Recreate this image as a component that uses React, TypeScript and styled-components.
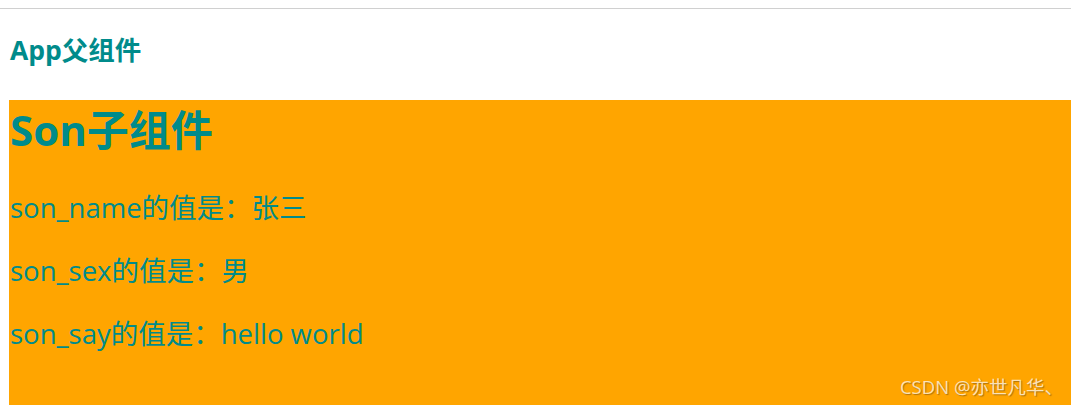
import styled, { createGlobalStyle } from 'styled-components';

const GlobalStyle = createGlobalStyle`
  html, body {
    margin: 0;
    padding: 0;
    background: #fff;
    font-family: "Open Sans", "Noto Sans CJK SC", sans-serif;
  }
`;

const Page = styled.div`
  width: 1071px;
  height: 405px;
  overflow: hidden;
`;

const TopRule = styled.div`
  margin-top: 8px;
  border-top: 1px solid #d0d0d0;
`;

const ParentTitle = styled.h3`
  margin: 0;
  padding: 26px 0 0 10px;
  height: 65px;
  line-height: 30px;
  font-size: 26.5px;
  font-weight: 700;
  color: #008b8b;
`;

const SonBox = styled.section`
  position: relative;
  margin-left: 9px;
  height: 305px;
  padding: 5px 0 0 1px;
  box-sizing: border-box;
  background: #ffa500;
  color: #008b8b;
`;

const SonTitle = styled.h1`
  margin: 0 0 35px;
  line-height: 50px;
  font-size: 42px;
  font-weight: 700;
`;

const Line = styled.p`
  margin: 0 0 27px;
  line-height: 36px;
  font-size: 27.5px;
`;

const Watermark = styled.span`
  position: absolute;
  right: 8px;
  bottom: 6px;
  font-size: 18.5px;
  color: rgba(255, 240, 215, 0.85);
  text-shadow: 1px 1px 1px rgba(120, 80, 20, 0.6);
`;

const rows = [
  { key: 'son_name', value: '张三' },
  { key: 'son_sex', value: '男' },
  { key: 'son_say', value: 'hello world' },
];

export default function App() {
  return (
    <Page>
      <GlobalStyle />
      <TopRule />
      <ParentTitle>App父组件</ParentTitle>
      <SonBox>
        <SonTitle>Son子组件</SonTitle>
        {rows.map((r) => (
          <Line key={r.key}>
            {r.key}的值是：{r.value}
          </Line>
        ))}
        <Watermark>CSDN @亦世凡华、</Watermark>
      </SonBox>
    </Page>
  );
}
